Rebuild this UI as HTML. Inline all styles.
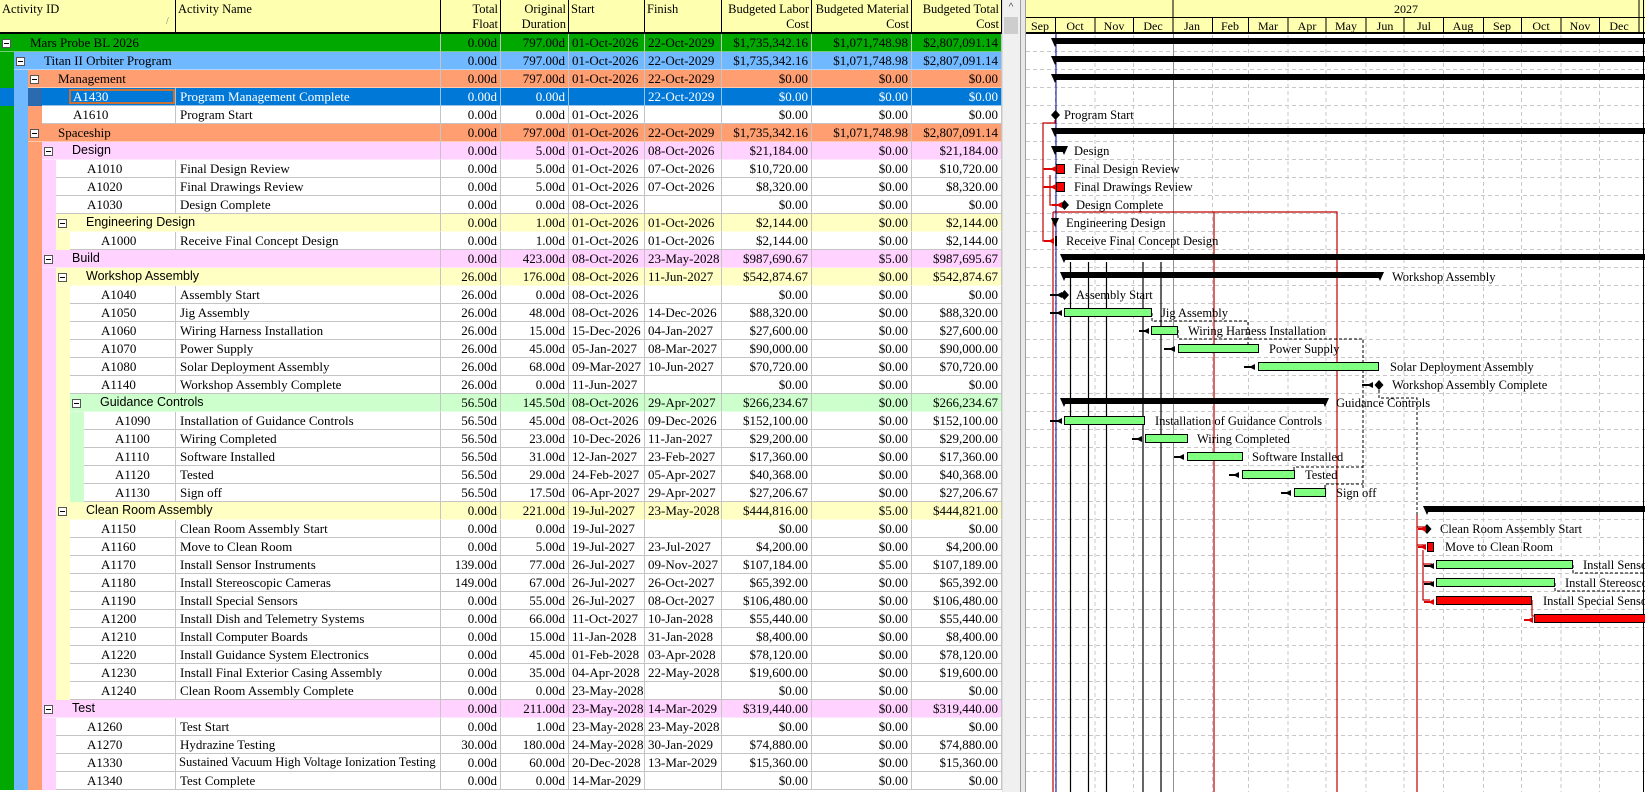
<!DOCTYPE html>
<html><head><meta charset="utf-8">
<style>
*{margin:0;padding:0;box-sizing:border-box}
body{width:1645px;height:792px;overflow:hidden;background:#fff;position:relative;font:13px "Liberation Serif",serif;color:#000}
.hd{position:absolute;top:0;height:34px;background:#ffffb0;border-right:1px solid #000;border-bottom:2px solid #000;font:12.5px "Liberation Serif",serif;line-height:15px;padding:2px 2px;white-space:nowrap;overflow:hidden}
.hr{text-align:right}
.r{position:absolute;left:0;width:1002px;height:18px}
.c{position:absolute;top:0;height:18px;border-right:1px solid #c4c4c4;border-bottom:1px solid #c4c4c4;line-height:17px;white-space:nowrap;overflow:hidden;padding:0 3px}
.n{left:176px;width:265px;padding-left:4px}
.tf{left:441px;width:60px;text-align:right}
.od{left:501px;width:68px;text-align:right}
.st{left:569px;width:76px}
.fi{left:645px;width:77px}
.la{left:722px;width:90px;text-align:right}
.ma{left:812px;width:100px;text-align:right}
.to{left:912px;width:90px;text-align:right}
.a .c{background:#fff}
.w{padding-left:30px}
.sans{font:12.5px "Liberation Sans",sans-serif;line-height:17px}
.ex{position:absolute;top:5px;width:9px;height:9px;background:#fff;border:1px solid #555}
.ex:after{content:"";position:absolute;left:1px;top:3px;width:5px;height:1px;background:#000}
.k0{background:#00a800}
.k1{background:linear-gradient(90deg,#00a800 0 14px,#70b8ff 14px)}
.k2{background:linear-gradient(90deg,#00a800 0 14px,#70b8ff 14px 28px,#ff9e70 28px)}
.k3{background:linear-gradient(90deg,#00a800 0 14px,#70b8ff 14px 28px,#ff9e70 28px 42px,#ffd2ff 42px)}
.k4{background:linear-gradient(90deg,#00a800 0 14px,#70b8ff 14px 28px,#ff9e70 28px 42px,#ffd2ff 42px 56px,#ffffc4 56px)}
.k5{background:linear-gradient(90deg,#00a800 0 14px,#70b8ff 14px 28px,#ff9e70 28px 42px,#ffd2ff 42px 56px,#ffffc4 56px 70px,#ccffcc 70px)}
.a3{background:linear-gradient(90deg,#00a800 0 14px,#70b8ff 14px 28px,#ff9e70 28px 42px,#fff 42px)}
.a4{background:linear-gradient(90deg,#00a800 0 14px,#70b8ff 14px 28px,#ff9e70 28px 42px,#ffd2ff 42px 56px,#fff 56px)}
.a5{background:linear-gradient(90deg,#00a800 0 14px,#70b8ff 14px 28px,#ff9e70 28px 42px,#ffd2ff 42px 56px,#ffffc4 56px 70px,#fff 70px)}
.a6{background:linear-gradient(90deg,#00a800 0 14px,#70b8ff 14px 28px,#ff9e70 28px 42px,#ffd2ff 42px 56px,#ffffc4 56px 70px,#ccffcc 70px 84px,#fff 84px)}
.sel{background:linear-gradient(90deg,#0078d7 0 14px,#70b8ff 14px 28px,#2a6bb0 28px 42px,#0078d7 42px);color:#fff}
.sel .c{border-color:#9cc3e6}
.wb .c{border-bottom-color:rgba(255,255,255,.45)}
</style></head><body>

<div class="hd" style="left:0;width:176px">Activity ID<span style="position:absolute;left:166px;top:14px;font-size:10px;color:#777">/</span></div>
<div class="hd" style="left:176px;width:265px">Activity Name</div>
<div class="hd hr" style="left:441px;width:60px">Total<br>Float</div>
<div class="hd hr" style="left:501px;width:68px">Original<br>Duration</div>
<div class="hd" style="left:569px;width:76px">Start</div>
<div class="hd" style="left:645px;width:77px">Finish</div>
<div class="hd hr" style="left:722px;width:90px">Budgeted Labor<br>Cost</div>
<div class="hd hr" style="left:812px;width:100px">Budgeted Material<br>Cost</div>
<div class="hd hr" style="left:912px;width:90px">Budgeted Total<br>Cost</div>

<div style="position:absolute;left:1002px;top:0;width:18px;height:792px;background:#f0f0f0;border-left:1px solid #ddd"></div>
<div style="position:absolute;left:1004px;top:2px;width:14px;height:12px;font:10px 'Liberation Sans',sans-serif;color:#555;text-align:center">&#94;</div>
<div style="position:absolute;left:1004px;top:17px;width:14px;height:17px;background:#cdcdcd"></div>
<div style="position:absolute;left:1020px;top:0;width:6px;height:792px;background:#e8e8e8;border-left:1px solid #a0a0a0;border-right:1px solid #a0a0a0"></div>

<div class="r k0 wb" style="top:34px"><span class="ex" style="left:2px"></span><div class="c w" style="left:0;width:441px;border-right-color:#c4c4c4">Mars Probe BL 2026</div><div class="c tf">0.00d</div><div class="c od">797.00d</div><div class="c st">01-Oct-2026</div><div class="c fi">22-Oct-2029</div><div class="c la">$1,735,342.16</div><div class="c ma">$1,071,748.98</div><div class="c to">$2,807,091.14</div></div>
<div class="r k1 wb" style="top:52px"><span class="ex" style="left:16px"></span><div class="c w" style="left:14px;width:427px">Titan II Orbiter Program</div><div class="c tf">0.00d</div><div class="c od">797.00d</div><div class="c st">01-Oct-2026</div><div class="c fi">22-Oct-2029</div><div class="c la">$1,735,342.16</div><div class="c ma">$1,071,748.98</div><div class="c to">$2,807,091.14</div></div>
<div class="r k2 wb" style="top:70px"><span class="ex" style="left:30px"></span><div class="c w" style="left:28px;width:413px">Management</div><div class="c tf">0.00d</div><div class="c od">797.00d</div><div class="c st">01-Oct-2026</div><div class="c fi">22-Oct-2029</div><div class="c la">$0.00</div><div class="c ma">$0.00</div><div class="c to">$0.00</div></div>
<div class="r sel" style="top:88px"><div class="c" style="left:42px;width:134px;padding-left:31px">A1430</div><div style="position:absolute;left:69px;top:1px;width:106px;height:15px;border:2px solid #c87137"></div><div class="c n">Program Management Complete</div><div class="c tf">0.00d</div><div class="c od">0.00d</div><div class="c st"></div><div class="c fi">22-Oct-2029</div><div class="c la">$0.00</div><div class="c ma">$0.00</div><div class="c to">$0.00</div></div>
<div class="r a3 a" style="top:106px"><div class="c" style="left:42px;width:134px;padding-left:31px">A1610</div><div class="c n">Program Start</div><div class="c tf">0.00d</div><div class="c od">0.00d</div><div class="c st">01-Oct-2026</div><div class="c fi"></div><div class="c la">$0.00</div><div class="c ma">$0.00</div><div class="c to">$0.00</div></div>
<div class="r k2 wb" style="top:124px"><span class="ex" style="left:30px"></span><div class="c w" style="left:28px;width:413px">Spaceship</div><div class="c tf">0.00d</div><div class="c od">797.00d</div><div class="c st">01-Oct-2026</div><div class="c fi">22-Oct-2029</div><div class="c la">$1,735,342.16</div><div class="c ma">$1,071,748.98</div><div class="c to">$2,807,091.14</div></div>
<div class="r k3 wb" style="top:142px"><span class="ex" style="left:44px"></span><div class="c w sans" style="left:42px;width:399px">Design</div><div class="c tf">0.00d</div><div class="c od">5.00d</div><div class="c st">01-Oct-2026</div><div class="c fi">08-Oct-2026</div><div class="c la">$21,184.00</div><div class="c ma">$0.00</div><div class="c to">$21,184.00</div></div>
<div class="r a4 a" style="top:160px"><div class="c" style="left:56px;width:120px;padding-left:31px">A1010</div><div class="c n">Final Design Review</div><div class="c tf">0.00d</div><div class="c od">5.00d</div><div class="c st">01-Oct-2026</div><div class="c fi">07-Oct-2026</div><div class="c la">$10,720.00</div><div class="c ma">$0.00</div><div class="c to">$10,720.00</div></div>
<div class="r a4 a" style="top:178px"><div class="c" style="left:56px;width:120px;padding-left:31px">A1020</div><div class="c n">Final Drawings Review</div><div class="c tf">0.00d</div><div class="c od">5.00d</div><div class="c st">01-Oct-2026</div><div class="c fi">07-Oct-2026</div><div class="c la">$8,320.00</div><div class="c ma">$0.00</div><div class="c to">$8,320.00</div></div>
<div class="r a4 a" style="top:196px"><div class="c" style="left:56px;width:120px;padding-left:31px">A1030</div><div class="c n">Design Complete</div><div class="c tf">0.00d</div><div class="c od">0.00d</div><div class="c st">08-Oct-2026</div><div class="c fi"></div><div class="c la">$0.00</div><div class="c ma">$0.00</div><div class="c to">$0.00</div></div>
<div class="r k4 wb" style="top:214px"><span class="ex" style="left:58px"></span><div class="c w sans" style="left:56px;width:385px">Engineering Design</div><div class="c tf">0.00d</div><div class="c od">1.00d</div><div class="c st">01-Oct-2026</div><div class="c fi">01-Oct-2026</div><div class="c la">$2,144.00</div><div class="c ma">$0.00</div><div class="c to">$2,144.00</div></div>
<div class="r a5 a" style="top:232px"><div class="c" style="left:70px;width:106px;padding-left:31px">A1000</div><div class="c n">Receive Final Concept Design</div><div class="c tf">0.00d</div><div class="c od">1.00d</div><div class="c st">01-Oct-2026</div><div class="c fi">01-Oct-2026</div><div class="c la">$2,144.00</div><div class="c ma">$0.00</div><div class="c to">$2,144.00</div></div>
<div class="r k3 wb" style="top:250px"><span class="ex" style="left:44px"></span><div class="c w sans" style="left:42px;width:399px">Build</div><div class="c tf">0.00d</div><div class="c od">423.00d</div><div class="c st">08-Oct-2026</div><div class="c fi">23-May-2028</div><div class="c la">$987,690.67</div><div class="c ma">$5.00</div><div class="c to">$987,695.67</div></div>
<div class="r k4 wb" style="top:268px"><span class="ex" style="left:58px"></span><div class="c w sans" style="left:56px;width:385px">Workshop Assembly</div><div class="c tf">26.00d</div><div class="c od">176.00d</div><div class="c st">08-Oct-2026</div><div class="c fi">11-Jun-2027</div><div class="c la">$542,874.67</div><div class="c ma">$0.00</div><div class="c to">$542,874.67</div></div>
<div class="r a5 a" style="top:286px"><div class="c" style="left:70px;width:106px;padding-left:31px">A1040</div><div class="c n">Assembly Start</div><div class="c tf">26.00d</div><div class="c od">0.00d</div><div class="c st">08-Oct-2026</div><div class="c fi"></div><div class="c la">$0.00</div><div class="c ma">$0.00</div><div class="c to">$0.00</div></div>
<div class="r a5 a" style="top:304px"><div class="c" style="left:70px;width:106px;padding-left:31px">A1050</div><div class="c n">Jig Assembly</div><div class="c tf">26.00d</div><div class="c od">48.00d</div><div class="c st">08-Oct-2026</div><div class="c fi">14-Dec-2026</div><div class="c la">$88,320.00</div><div class="c ma">$0.00</div><div class="c to">$88,320.00</div></div>
<div class="r a5 a" style="top:322px"><div class="c" style="left:70px;width:106px;padding-left:31px">A1060</div><div class="c n">Wiring Harness Installation</div><div class="c tf">26.00d</div><div class="c od">15.00d</div><div class="c st">15-Dec-2026</div><div class="c fi">04-Jan-2027</div><div class="c la">$27,600.00</div><div class="c ma">$0.00</div><div class="c to">$27,600.00</div></div>
<div class="r a5 a" style="top:340px"><div class="c" style="left:70px;width:106px;padding-left:31px">A1070</div><div class="c n">Power Supply</div><div class="c tf">26.00d</div><div class="c od">45.00d</div><div class="c st">05-Jan-2027</div><div class="c fi">08-Mar-2027</div><div class="c la">$90,000.00</div><div class="c ma">$0.00</div><div class="c to">$90,000.00</div></div>
<div class="r a5 a" style="top:358px"><div class="c" style="left:70px;width:106px;padding-left:31px">A1080</div><div class="c n">Solar Deployment Assembly</div><div class="c tf">26.00d</div><div class="c od">68.00d</div><div class="c st">09-Mar-2027</div><div class="c fi">10-Jun-2027</div><div class="c la">$70,720.00</div><div class="c ma">$0.00</div><div class="c to">$70,720.00</div></div>
<div class="r a5 a" style="top:376px"><div class="c" style="left:70px;width:106px;padding-left:31px">A1140</div><div class="c n">Workshop Assembly Complete</div><div class="c tf">26.00d</div><div class="c od">0.00d</div><div class="c st">11-Jun-2027</div><div class="c fi"></div><div class="c la">$0.00</div><div class="c ma">$0.00</div><div class="c to">$0.00</div></div>
<div class="r k5 wb" style="top:394px"><span class="ex" style="left:72px"></span><div class="c w sans" style="left:70px;width:371px">Guidance Controls</div><div class="c tf">56.50d</div><div class="c od">145.50d</div><div class="c st">08-Oct-2026</div><div class="c fi">29-Apr-2027</div><div class="c la">$266,234.67</div><div class="c ma">$0.00</div><div class="c to">$266,234.67</div></div>
<div class="r a6 a" style="top:412px"><div class="c" style="left:84px;width:92px;padding-left:31px">A1090</div><div class="c n">Installation of Guidance Controls</div><div class="c tf">56.50d</div><div class="c od">45.00d</div><div class="c st">08-Oct-2026</div><div class="c fi">09-Dec-2026</div><div class="c la">$152,100.00</div><div class="c ma">$0.00</div><div class="c to">$152,100.00</div></div>
<div class="r a6 a" style="top:430px"><div class="c" style="left:84px;width:92px;padding-left:31px">A1100</div><div class="c n">Wiring Completed</div><div class="c tf">56.50d</div><div class="c od">23.00d</div><div class="c st">10-Dec-2026</div><div class="c fi">11-Jan-2027</div><div class="c la">$29,200.00</div><div class="c ma">$0.00</div><div class="c to">$29,200.00</div></div>
<div class="r a6 a" style="top:448px"><div class="c" style="left:84px;width:92px;padding-left:31px">A1110</div><div class="c n">Software Installed</div><div class="c tf">56.50d</div><div class="c od">31.00d</div><div class="c st">12-Jan-2027</div><div class="c fi">23-Feb-2027</div><div class="c la">$17,360.00</div><div class="c ma">$0.00</div><div class="c to">$17,360.00</div></div>
<div class="r a6 a" style="top:466px"><div class="c" style="left:84px;width:92px;padding-left:31px">A1120</div><div class="c n">Tested</div><div class="c tf">56.50d</div><div class="c od">29.00d</div><div class="c st">24-Feb-2027</div><div class="c fi">05-Apr-2027</div><div class="c la">$40,368.00</div><div class="c ma">$0.00</div><div class="c to">$40,368.00</div></div>
<div class="r a6 a" style="top:484px"><div class="c" style="left:84px;width:92px;padding-left:31px">A1130</div><div class="c n">Sign off</div><div class="c tf">56.50d</div><div class="c od">17.50d</div><div class="c st">06-Apr-2027</div><div class="c fi">29-Apr-2027</div><div class="c la">$27,206.67</div><div class="c ma">$0.00</div><div class="c to">$27,206.67</div></div>
<div class="r k4 wb" style="top:502px"><span class="ex" style="left:58px"></span><div class="c w sans" style="left:56px;width:385px">Clean Room Assembly</div><div class="c tf">0.00d</div><div class="c od">221.00d</div><div class="c st">19-Jul-2027</div><div class="c fi">23-May-2028</div><div class="c la">$444,816.00</div><div class="c ma">$5.00</div><div class="c to">$444,821.00</div></div>
<div class="r a5 a" style="top:520px"><div class="c" style="left:70px;width:106px;padding-left:31px">A1150</div><div class="c n">Clean Room Assembly Start</div><div class="c tf">0.00d</div><div class="c od">0.00d</div><div class="c st">19-Jul-2027</div><div class="c fi"></div><div class="c la">$0.00</div><div class="c ma">$0.00</div><div class="c to">$0.00</div></div>
<div class="r a5 a" style="top:538px"><div class="c" style="left:70px;width:106px;padding-left:31px">A1160</div><div class="c n">Move to Clean Room</div><div class="c tf">0.00d</div><div class="c od">5.00d</div><div class="c st">19-Jul-2027</div><div class="c fi">23-Jul-2027</div><div class="c la">$4,200.00</div><div class="c ma">$0.00</div><div class="c to">$4,200.00</div></div>
<div class="r a5 a" style="top:556px"><div class="c" style="left:70px;width:106px;padding-left:31px">A1170</div><div class="c n">Install Sensor Instruments</div><div class="c tf">139.00d</div><div class="c od">77.00d</div><div class="c st">26-Jul-2027</div><div class="c fi">09-Nov-2027</div><div class="c la">$107,184.00</div><div class="c ma">$5.00</div><div class="c to">$107,189.00</div></div>
<div class="r a5 a" style="top:574px"><div class="c" style="left:70px;width:106px;padding-left:31px">A1180</div><div class="c n">Install Stereoscopic Cameras</div><div class="c tf">149.00d</div><div class="c od">67.00d</div><div class="c st">26-Jul-2027</div><div class="c fi">26-Oct-2027</div><div class="c la">$65,392.00</div><div class="c ma">$0.00</div><div class="c to">$65,392.00</div></div>
<div class="r a5 a" style="top:592px"><div class="c" style="left:70px;width:106px;padding-left:31px">A1190</div><div class="c n">Install Special Sensors</div><div class="c tf">0.00d</div><div class="c od">55.00d</div><div class="c st">26-Jul-2027</div><div class="c fi">08-Oct-2027</div><div class="c la">$106,480.00</div><div class="c ma">$0.00</div><div class="c to">$106,480.00</div></div>
<div class="r a5 a" style="top:610px"><div class="c" style="left:70px;width:106px;padding-left:31px">A1200</div><div class="c n">Install Dish and Telemetry Systems</div><div class="c tf">0.00d</div><div class="c od">66.00d</div><div class="c st">11-Oct-2027</div><div class="c fi">10-Jan-2028</div><div class="c la">$55,440.00</div><div class="c ma">$0.00</div><div class="c to">$55,440.00</div></div>
<div class="r a5 a" style="top:628px"><div class="c" style="left:70px;width:106px;padding-left:31px">A1210</div><div class="c n">Install Computer Boards</div><div class="c tf">0.00d</div><div class="c od">15.00d</div><div class="c st">11-Jan-2028</div><div class="c fi">31-Jan-2028</div><div class="c la">$8,400.00</div><div class="c ma">$0.00</div><div class="c to">$8,400.00</div></div>
<div class="r a5 a" style="top:646px"><div class="c" style="left:70px;width:106px;padding-left:31px">A1220</div><div class="c n">Install Guidance System Electronics</div><div class="c tf">0.00d</div><div class="c od">45.00d</div><div class="c st">01-Feb-2028</div><div class="c fi">03-Apr-2028</div><div class="c la">$78,120.00</div><div class="c ma">$0.00</div><div class="c to">$78,120.00</div></div>
<div class="r a5 a" style="top:664px"><div class="c" style="left:70px;width:106px;padding-left:31px">A1230</div><div class="c n">Install Final Exterior Casing Assembly</div><div class="c tf">0.00d</div><div class="c od">35.00d</div><div class="c st">04-Apr-2028</div><div class="c fi">22-May-2028</div><div class="c la">$19,600.00</div><div class="c ma">$0.00</div><div class="c to">$19,600.00</div></div>
<div class="r a5 a" style="top:682px"><div class="c" style="left:70px;width:106px;padding-left:31px">A1240</div><div class="c n">Clean Room Assembly Complete</div><div class="c tf">0.00d</div><div class="c od">0.00d</div><div class="c st">23-May-2028</div><div class="c fi"></div><div class="c la">$0.00</div><div class="c ma">$0.00</div><div class="c to">$0.00</div></div>
<div class="r k3 wb" style="top:700px"><span class="ex" style="left:44px"></span><div class="c w sans" style="left:42px;width:399px">Test</div><div class="c tf">0.00d</div><div class="c od">211.00d</div><div class="c st">23-May-2028</div><div class="c fi">14-Mar-2029</div><div class="c la">$319,440.00</div><div class="c ma">$0.00</div><div class="c to">$319,440.00</div></div>
<div class="r a4 a" style="top:718px"><div class="c" style="left:56px;width:120px;padding-left:31px">A1260</div><div class="c n">Test Start</div><div class="c tf">0.00d</div><div class="c od">1.00d</div><div class="c st">23-May-2028</div><div class="c fi">23-May-2028</div><div class="c la">$0.00</div><div class="c ma">$0.00</div><div class="c to">$0.00</div></div>
<div class="r a4 a" style="top:736px"><div class="c" style="left:56px;width:120px;padding-left:31px">A1270</div><div class="c n">Hydrazine Testing</div><div class="c tf">30.00d</div><div class="c od">180.00d</div><div class="c st">24-May-2028</div><div class="c fi">30-Jan-2029</div><div class="c la">$74,880.00</div><div class="c ma">$0.00</div><div class="c to">$74,880.00</div></div>
<div class="r a4 a" style="top:754px"><div class="c" style="left:56px;width:120px;padding-left:31px">A1330</div><div class="c n" style="font-size:12.6px;padding-left:3px;padding-right:0">Sustained Vacuum High Voltage Ionization Testing</div><div class="c tf">0.00d</div><div class="c od">60.00d</div><div class="c st">20-Dec-2028</div><div class="c fi">13-Mar-2029</div><div class="c la">$15,360.00</div><div class="c ma">$0.00</div><div class="c to">$15,360.00</div></div>
<div class="r a4 a" style="top:772px"><div class="c" style="left:56px;width:120px;padding-left:31px">A1340</div><div class="c n">Test Complete</div><div class="c tf">0.00d</div><div class="c od">0.00d</div><div class="c st">14-Mar-2029</div><div class="c fi"></div><div class="c la">$0.00</div><div class="c ma">$0.00</div><div class="c to">$0.00</div></div>

<svg style="position:absolute;left:1026px;top:0" width="619" height="792" viewBox="1026 0 619 792" xmlns="http://www.w3.org/2000/svg" font-family="Liberation Serif, serif" font-size="12.5">
<rect x="1026" y="0" width="619" height="34" fill="#ffffb0"/>
<g stroke="#000" stroke-width="1">
<line x1="1026" y1="17.5" x2="1645" y2="17.5"/>
<line x1="1026" y1="33" x2="1645" y2="33" stroke-width="2"/>
<line x1="1173" y1="0" x2="1173" y2="34"/>
<line x1="1055.5" y1="17" x2="1055.5" y2="34"/><line x1="1095" y1="17" x2="1095" y2="34"/><line x1="1133.5" y1="17" x2="1133.5" y2="34"/><line x1="1212.5" y1="17" x2="1212.5" y2="34"/><line x1="1248.5" y1="17" x2="1248.5" y2="34"/><line x1="1288" y1="17" x2="1288" y2="34"/><line x1="1326" y1="17" x2="1326" y2="34"/><line x1="1366" y1="17" x2="1366" y2="34"/><line x1="1404" y1="17" x2="1404" y2="34"/><line x1="1443.5" y1="17" x2="1443.5" y2="34"/><line x1="1483.5" y1="17" x2="1483.5" y2="34"/><line x1="1521.5" y1="17" x2="1521.5" y2="34"/><line x1="1561" y1="17" x2="1561" y2="34"/><line x1="1599.5" y1="17" x2="1599.5" y2="34"/><line x1="1639" y1="0" x2="1639" y2="34"/>
</g>
<g font-size="12" text-anchor="middle">
<text x="1406" y="13">2027</text>
<text x="1040" y="30">Sep</text><text x="1075" y="30">Oct</text><text x="1114" y="30">Nov</text><text x="1153" y="30">Dec</text><text x="1192" y="30">Jan</text><text x="1230" y="30">Feb</text><text x="1268" y="30">Mar</text><text x="1307" y="30">Apr</text><text x="1346" y="30">May</text><text x="1385" y="30">Jun</text><text x="1424" y="30">Jul</text><text x="1463" y="30">Aug</text><text x="1502" y="30">Sep</text><text x="1541" y="30">Oct</text><text x="1580" y="30">Nov</text><text x="1619" y="30">Dec</text>
</g>
<g stroke="#c8c8c8" stroke-dasharray="4,3" stroke-width="1">
<line x1="1055.5" y1="35" x2="1055.5" y2="792"/><line x1="1095" y1="35" x2="1095" y2="792"/><line x1="1133.5" y1="35" x2="1133.5" y2="792"/><line x1="1212.5" y1="35" x2="1212.5" y2="792"/><line x1="1248.5" y1="35" x2="1248.5" y2="792"/><line x1="1288" y1="35" x2="1288" y2="792"/><line x1="1326" y1="35" x2="1326" y2="792"/><line x1="1366" y1="35" x2="1366" y2="792"/><line x1="1404" y1="35" x2="1404" y2="792"/><line x1="1443.5" y1="35" x2="1443.5" y2="792"/><line x1="1483.5" y1="35" x2="1483.5" y2="792"/><line x1="1521.5" y1="35" x2="1521.5" y2="792"/><line x1="1561" y1="35" x2="1561" y2="792"/><line x1="1599.5" y1="35" x2="1599.5" y2="792"/>
<path d="M1026 51.5H1645M1026 69.5H1645M1026 87.5H1645M1026 105.5H1645M1026 123.5H1645M1026 141.5H1645M1026 159.5H1645M1026 177.5H1645M1026 195.5H1645M1026 213.5H1645M1026 231.5H1645M1026 249.5H1645M1026 267.5H1645M1026 285.5H1645M1026 303.5H1645M1026 321.5H1645M1026 339.5H1645M1026 357.5H1645M1026 375.5H1645M1026 393.5H1645M1026 411.5H1645M1026 429.5H1645M1026 447.5H1645M1026 465.5H1645M1026 483.5H1645M1026 501.5H1645M1026 519.5H1645M1026 537.5H1645M1026 555.5H1645M1026 573.5H1645M1026 591.5H1645M1026 609.5H1645M1026 627.5H1645M1026 645.5H1645M1026 663.5H1645M1026 681.5H1645M1026 699.5H1645M1026 717.5H1645M1026 735.5H1645M1026 753.5H1645M1026 771.5H1645"/>
</g>
<line x1="1173.5" y1="34" x2="1173.5" y2="792" stroke="#909090"/>
<line x1="1643.5" y1="0" x2="1643.5" y2="792" stroke="#000"/>
<g stroke="#000" stroke-width="1.2">
<line x1="1070.5" y1="262" x2="1070.5" y2="792"/><line x1="1088.5" y1="262" x2="1088.5" y2="792"/><line x1="1106.5" y1="262" x2="1106.5" y2="792"/><line x1="1143" y1="262" x2="1143" y2="792"/><line x1="1161" y1="262" x2="1161" y2="792"/>
</g>
<g stroke="#c00000" fill="none" stroke-width="1.2">
<path d="M1055 120V123H1043V241H1051"/>
<path d="M1043 169H1054M1043 187H1054M1050 175V205H1058"/>
<path d="M1053 212H1337V792M1214 212V792M1053 212V792"/>
<path d="M1417 515V792M1417 527H1425M1417 545H1425M1423 550V600H1430M1423 564H1432M1423 582H1432"/>
<path d="M1532 600V616H1537"/>
</g>
<line x1="1056" y1="34" x2="1056" y2="792" stroke="#0000a0"/>
<g stroke="#000" stroke-dasharray="3,2" fill="none">
<path d="M1152 313V321H1248V345"/>
<path d="M1178 330V339H1363V490"/>
<path d="M1379 390V398H1417V515"/>
<path d="M1294 475V467H1363"/>
<path d="M1325 493V484H1363"/>
<path d="M1573 565V573H1645"/>
<path d="M1555 583V591H1645"/>
</g>
<g fill="#000">
<rect x="1055" y="38" width="590" height="6"/><polygon points="1051,38 1059,38 1055,47"/>
<rect x="1055" y="56" width="590" height="6"/><polygon points="1051,56 1059,56 1055,65"/>
<rect x="1055" y="74" width="590" height="6"/><polygon points="1051,74 1059,74 1055,83"/>
<rect x="1055" y="128" width="590" height="6"/><polygon points="1051,128 1059,128 1055,137"/>
<rect x="1055" y="146" width="10" height="6"/><polygon points="1051,146 1059,146 1055,155"/><polygon points="1060,146 1068,146 1064,155"/>
<polygon points="1051,218 1059,218 1055,227"/>
<rect x="1064" y="254" width="581" height="6"/><polygon points="1060,254 1068,254 1064,263"/>
<rect x="1064" y="272" width="316" height="6"/><polygon points="1060,272 1068,272 1064,281"/><polygon points="1376,272 1384,272 1380,281"/>
<rect x="1064" y="398" width="261" height="6"/><polygon points="1060,398 1068,398 1064,407"/><polygon points="1321,398 1329,398 1325,407"/>
<rect x="1427" y="506" width="218" height="6"/><polygon points="1423,506 1431,506 1427,515"/>
<polygon points="1055.5,110 1060,115 1055.5,120 1051,115"/>
<polygon points="1064.5,200 1069,205 1064.5,210 1060,205"/>
<polygon points="1064.5,290 1069,295 1064.5,300 1060,295"/>
<polygon points="1379,380 1383.5,385 1379,390 1374.5,385"/>
<polygon points="1427,524 1431.5,529 1427,534 1422.5,529"/>
<rect x="1055" y="236" width="2" height="10"/>
</g>
<g fill="#000">
<path d="M1050 294h8l4-2v6l-4-2h-8z"/>
<path d="M1050 312h8l4-2v6l-4-2h-8z"/>
<path d="M1050 420h8l4-2v6l-4-2h-8z"/>
<path d="M1139 330h6l4-2v6l-4-2h-6z"/>
<path d="M1164 348h7l4-2v6l-4-2h-7z"/>
<path d="M1244 366h7l4-2v6l-4-2h-7z"/>
<path d="M1362 384h7l4-2v6l-4-2h-7z"/>
<path d="M1132 438h6l4-2v6l-4-2h-6z"/>
<path d="M1174 456h6l4-2v6l-4-2h-6z"/>
<path d="M1229 474h6l4-2v6l-4-2h-6z"/>
<path d="M1281 492h6l4-2v6l-4-2h-6z"/>
<path d="M1424 565h6l4-2v6l-4-2h-6z"/>
<path d="M1424 583h6l4-2v6l-4-2h-6z"/>
</g>
<g fill="#e00000">
<path d="M1044 168h8l4-2v6l-4-2h-8z"/>
<path d="M1044 186h8l4-2v6l-4-2h-8z"/>
<path d="M1052 204h6l4-2v6l-4-2h-6z"/>
<path d="M1044 240h6l4-2v6l-4-2h-6z"/>
<path d="M1418 528h4l4-2v6l-4-2h-4z"/>
<path d="M1418 546h4l4-2v6l-4-2h-4z"/>
<path d="M1424 601h6l4-2v6l-4-2h-6z"/>
<path d="M1524 619h5l4-2v6l-4-2h-5z"/>
</g>
<g stroke="#000" stroke-width="1">
<rect x="1056.5" y="164.5" width="8" height="9" fill="#f00"/>
<rect x="1056.5" y="182.5" width="8" height="9" fill="#f00"/>
<rect x="1064.5" y="308.5" width="87" height="8" fill="#80ff80"/>
<rect x="1151.5" y="326.5" width="26" height="8" fill="#80ff80"/>
<rect x="1178.5" y="344.5" width="80" height="8" fill="#80ff80"/>
<rect x="1258.5" y="362.5" width="120" height="8" fill="#80ff80"/>
<rect x="1064.5" y="416.5" width="80" height="8" fill="#80ff80"/>
<rect x="1145.5" y="434.5" width="42" height="8" fill="#80ff80"/>
<rect x="1187.5" y="452.5" width="55" height="8" fill="#80ff80"/>
<rect x="1242.5" y="470.5" width="52" height="8" fill="#80ff80"/>
<rect x="1294.5" y="488.5" width="31" height="8" fill="#80ff80"/>
<rect x="1427.5" y="542.5" width="6" height="9" fill="#f00"/>
<rect x="1436.5" y="560.5" width="136" height="8" fill="#80ff80"/>
<rect x="1436.5" y="578.5" width="118" height="8" fill="#80ff80"/>
<rect x="1436.5" y="596.5" width="95" height="8" fill="#f00"/>
<rect x="1534.5" y="614.5" width="115" height="8" fill="#f00"/>
</g>
<g>
<text x="1064" y="119">Program Start</text>
<text x="1074" y="155">Design</text>
<text x="1074" y="173">Final Design Review</text>
<text x="1074" y="191">Final Drawings Review</text>
<text x="1076" y="209">Design Complete</text>
<text x="1066" y="227">Engineering Design</text>
<text x="1066" y="245">Receive Final Concept Design</text>
<text x="1392" y="281">Workshop Assembly</text>
<text x="1076" y="299">Assembly Start</text>
<text x="1161" y="317">Jig Assembly</text>
<text x="1188" y="335">Wiring Harness Installation</text>
<text x="1269" y="353">Power Supply</text>
<text x="1390" y="371">Solar Deployment Assembly</text>
<text x="1392" y="389">Workshop Assembly Complete</text>
<text x="1336" y="407">Guidance Controls</text>
<text x="1155" y="425">Installation of Guidance Controls</text>
<text x="1197" y="443">Wiring Completed</text>
<text x="1252" y="461">Software Installed</text>
<text x="1305" y="479">Tested</text>
<text x="1336" y="497">Sign off</text>
<text x="1440" y="533">Clean Room Assembly Start</text>
<text x="1445" y="551">Move to Clean Room</text>
<text x="1583" y="569">Install Sensor Instruments</text>
<text x="1565" y="587">Install Stereoscopic Cameras</text>
<text x="1543" y="605">Install Special Sensors</text>
</g>
</svg>
</body></html>
